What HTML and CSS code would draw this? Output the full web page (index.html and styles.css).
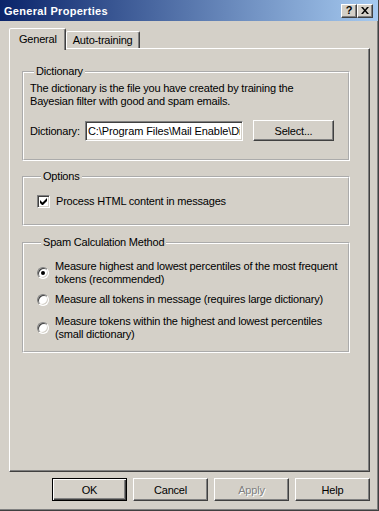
FILE: index.html
```html
<!DOCTYPE html>
<html lang="en">
<head>
  <meta charset="UTF-8">
  <title>General Properties</title>
  <link rel="stylesheet" href="styles.css">
</head>
<body>
  <div class="window">
    <div class="titlebar">
      <span class="title">General Properties</span>
      <div class="title-buttons">
        <div class="title-btn">?</div>
        <div class="title-btn">
          <svg width="8" height="7" viewBox="0 0 8 7">
            <path d="M0 0h2l2 2.5L6 0h2L5 3.5 8 7H6L4 4.5 2 7H0l3-3.5z" fill="#000"/>
          </svg>
        </div>
      </div>
    </div>

    <div class="dialog">
      <div class="tabs">
        <div class="tab active">General</div>
        <div class="tab">Auto-training</div>
      </div>

      <div class="panel">
        <fieldset class="group group-dict">
          <legend>Dictionary</legend>
          <p class="desc">The dictionary is the file you have created by training the Bayesian filter with good and spam emails.</p>
          <div class="dict-row">
            <span class="dict-label">Dictionary:</span>
            <input class="text-input" value="C:\Program Files\Mail Enable\Dictionary.dat" readonly>
            <div class="btn btn-select">Select...</div>
          </div>
        </fieldset>

        <fieldset class="group group-options">
          <legend>Options</legend>
          <div class="check-row">
            <div class="checkbox">
              <svg width="7" height="7" viewBox="0 0 7 7">
                <path d="M0 2v3l2 2h1l4-4V0L2.5 4.5z" fill="#000"/>
              </svg>
            </div>
            <span>Process HTML content in messages</span>
          </div>
        </fieldset>

        <fieldset class="group group-spam">
          <legend>Spam Calculation Method</legend>
          <div class="radio-row">
            <div class="radio checked"></div>
            <span>Measure highest and lowest percentiles of the most frequent tokens (recommended)</span>
          </div>
          <div class="radio-row row-2">
            <div class="radio"></div>
            <span>Measure all tokens in message (requires large dictionary)</span>
          </div>
          <div class="radio-row row-3">
            <div class="radio"></div>
            <span>Measure tokens within the highest and lowest percentiles (small dictionary)</span>
          </div>
        </fieldset>
      </div>

      <div class="buttons">
        <div class="btn default">OK</div>
        <div class="btn">Cancel</div>
        <div class="btn disabled">Apply</div>
        <div class="btn">Help</div>
      </div>
    </div>
  </div>
</body>
</html>
```

FILE: styles.css
```css
body {
  margin: 0;
  padding: 0;
  font-family: "Liberation Sans", Arial, sans-serif;
  font-size: 11px;
  letter-spacing: -0.2px;
  color: #000;
  background-color: #d4d0c8;
}

.window {
  width: 379px;
  height: 511px;
  box-sizing: border-box;
  background-color: #d4d0c8;
  border-right: 1px solid #404040;
  border-bottom: 1px solid #404040;
  box-shadow: inset -1px -1px 0 #808080;
}

.titlebar {
  height: 21px;
  display: flex;
  align-items: center;
  justify-content: space-between;
  padding: 0 5px 0 4px;
  background: linear-gradient(to right, #0a246a, #a6caf0);
}

.title {
  color: #fff;
  font-weight: bold;
  font-size: 11px;
  letter-spacing: 0.3px;
}

.title-buttons {
  display: flex;
}

.title-btn {
  width: 16px;
  height: 14px;
  box-sizing: border-box;
  display: flex;
  align-items: center;
  justify-content: center;
  background-color: #d4d0c8;
  border: 1px solid;
  border-color: #fff #404040 #404040 #fff;
  box-shadow: inset -1px -1px 0 #808080;
  font-weight: bold;
  font-size: 11px;
  letter-spacing: 0;
  line-height: 1;
}

.dialog {
  padding: 7px 8px 0 9px;
}

.tabs {
  display: flex;
  align-items: flex-end;
  height: 20px;
  position: relative;
  z-index: 1;
}

.tab {
  height: 17px;
  line-height: 16px;
  padding: 0 6px;
  box-sizing: border-box;
  border: 1px solid;
  border-bottom: 0;
  border-color: #fff #404040 transparent #fff;
  border-radius: 2px 2px 0 0;
  box-shadow: inset -1px 0 0 #808080;
  background-color: #d4d0c8;
}

.tab.active {
  height: 22px;
  margin-bottom: -2px;
  line-height: 20px;
  padding: 0 8px 0 9px;
}

.panel {
  height: 424px;
  box-sizing: border-box;
  border: 1px solid;
  border-color: #fff #404040 #404040 #fff;
  box-shadow: inset -1px -1px 0 #808080;
  padding: 16px 0 0 12px;
}

.group {
  width: 328px;
  box-sizing: border-box;
  margin: 0;
  border: 2px groove #fff;
  padding: 0 8px;
}

.group legend {
  padding: 0 2px;
  margin-left: 4px;
  line-height: 13px;
}

.group-dict {
  padding-top: 4px;
  padding-bottom: 18px;
  padding-left: 6px;
}

.desc {
  margin: 0;
  line-height: 13px;
  width: 290px;
}

.dict-row {
  display: flex;
  align-items: center;
  margin-top: 12px;
}

.dict-label {
  width: 55px;
}

.text-input {
  width: 158px;
  height: 20px;
  box-sizing: border-box;
  margin: 0;
  padding: 0 2px;
  font-family: inherit;
  font-size: 11px;
  letter-spacing: -0.1px;
  color: #000;
  background-color: #fff;
  border: 1px solid;
  border-color: #808080 #fff #fff #808080;
  box-shadow: inset 1px 1px 0 #404040, inset -1px -1px 0 #d4d0c8;
  outline: none;
}

.btn {
  width: 75px;
  height: 23px;
  box-sizing: border-box;
  display: flex;
  align-items: center;
  justify-content: center;
  background-color: #d4d0c8;
  border: 1px solid;
  border-color: #fff #404040 #404040 #fff;
  box-shadow: inset -1px -1px 0 #808080;
}

.btn-select {
  width: 81px;
  height: 21px;
  margin-left: 10px;
}

.group-options {
  margin-top: 9px;
  padding-top: 12px;
  padding-bottom: 16px;
  padding-left: 13px;
}

.check-row,
.radio-row {
  display: flex;
  align-items: center;
  line-height: 13px;
}

.checkbox {
  width: 13px;
  height: 13px;
  box-sizing: border-box;
  margin-right: 6px;
  display: flex;
  align-items: center;
  justify-content: center;
  background-color: #fff;
  border: 1px solid;
  border-color: #808080 #fff #fff #808080;
  box-shadow: inset 1px 1px 0 #404040, inset -1px -1px 0 #d4d0c8;
}

.group-spam {
  margin-top: 10px;
  padding-top: 11px;
  padding-bottom: 10px;
  padding-left: 13px;
}

.radio {
  flex: none;
  position: relative;
  width: 12px;
  height: 12px;
  box-sizing: border-box;
  margin-right: 6px;
  border-radius: 50%;
  background-color: #fff;
  border: 1px solid;
  border-color: #808080 #fff #fff #808080;
  box-shadow: inset 1px 1px 0 #404040, inset -1px -1px 0 #d4d0c8;
}

.radio.checked::after {
  content: "";
  position: absolute;
  left: 3px;
  top: 3px;
  width: 4px;
  height: 4px;
  border-radius: 50%;
  background-color: #000;
}

.radio-row span {
  width: 285px;
}

.row-2 {
  margin-top: 7px;
}

.row-3 {
  margin-top: 9px;
}

.buttons {
  display: flex;
  justify-content: flex-end;
  gap: 6px;
  margin-top: 6px;
}

.btn.default {
  border-color: #000;
  box-shadow: inset 1px 1px 0 #fff, inset -1px -1px 0 #404040, inset -2px -2px 0 #808080;
}

.btn.disabled {
  color: #808080;
  text-shadow: 1px 1px 0 #fff;
}
```
